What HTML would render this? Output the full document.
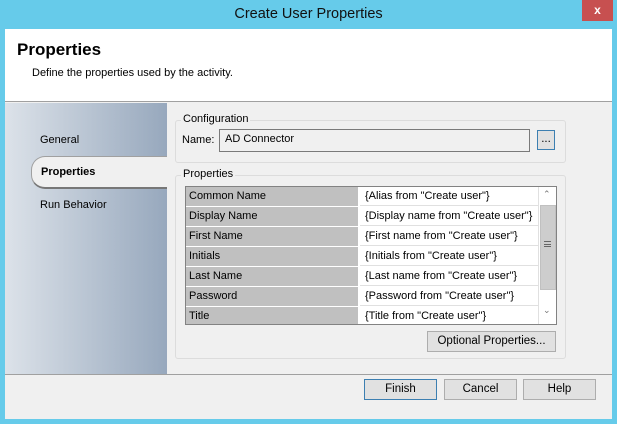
<!DOCTYPE html><html><head><style>
*{margin:0;padding:0;box-sizing:border-box}
body{width:617px;height:424px;background:#66cbea;font-family:"Liberation Sans",sans-serif;font-size:11px;color:#000;position:relative;overflow:hidden}
.a{position:absolute}
.btn{position:absolute;background:#e1e1e1;border:1px solid #adadad;text-align:center;line-height:18px;font-size:11.5px}
.row{position:absolute;left:0;width:352px;height:20px}
.row .k{position:absolute;left:0;width:172px;height:19px;background:#c0c0c0;padding-left:3px;line-height:19px}
.row .v{position:absolute;left:174px;width:178px;height:19px;background:#fff;padding-left:5px;line-height:19px;border-bottom:1px solid #e0e0e0}
</style></head><body>
<div class="a" style="left:0;top:6px;width:617px;text-align:center;font-size:14.5px;color:#111">Create User Properties</div>
<div class="a" style="left:582px;top:0;width:31px;height:21px;background:#c75050;color:#fff;text-align:center;font-weight:bold;font-size:12px;line-height:20px">x</div>
<div class="a" style="left:5px;top:29px;width:607px;height:390px;background:#f0f0f0"></div>
<div class="a" style="left:5px;top:29px;width:607px;height:73px;background:#fff;border-bottom:1px solid #a0a0a0"></div>
<div class="a" style="left:17px;top:40px;font-size:17px;font-weight:bold">Properties</div>
<div class="a" style="left:32px;top:67px;font-size:11px">Define the properties used by the activity.</div>
<div class="a" style="left:5px;top:103px;width:162px;height:271px;background:linear-gradient(90deg,#dce2e9,#97a8bd)"></div>
<div class="a" style="left:40px;top:134px">General</div>
<div class="a" style="left:31px;top:156px;width:136px;height:33px;background:#f0f0f0;border:1px solid #a0a0a0;border-right:none;border-bottom:2px solid #777;border-radius:14px 0 0 14px"></div>
<div class="a" style="left:41px;top:166px;font-weight:bold">Properties</div>
<div class="a" style="left:40px;top:199px">Run Behavior</div>
<div class="a" style="left:175px;top:120px;width:391px;height:43px;border:1px solid #dcdcdc;border-radius:3px"></div>
<div class="a" style="left:181px;top:113px;background:#f0f0f0;padding:0 2px">Configuration</div>
<div class="a" style="left:182px;top:134px">Name:</div>
<div class="a" style="left:219px;top:129px;width:311px;height:23px;border:1px solid #7a7a7a;background:#f0f0f0;padding:3px 5px">AD Connector</div>
<div class="btn" style="left:537px;top:130px;width:18px;height:20px;border-color:#3c7fb1;line-height:16px">...</div>
<div class="a" style="left:175px;top:175px;width:391px;height:184px;border:1px solid #dcdcdc;border-radius:3px"></div>
<div class="a" style="left:181px;top:168px;background:#f0f0f0;padding:0 2px">Properties</div>
<div class="a" style="left:185px;top:186px;width:372px;height:139px;border:1px solid #828282;background:#fff;overflow:hidden">
<div class="row" style="top:0"><div class="k">Common Name</div><div class="v">{Alias from "Create user"}</div></div>
<div class="row" style="top:20px"><div class="k">Display Name</div><div class="v">{Display name from "Create user"}</div></div>
<div class="row" style="top:40px"><div class="k">First Name</div><div class="v">{First name from "Create user"}</div></div>
<div class="row" style="top:60px"><div class="k">Initials</div><div class="v">{Initials from "Create user"}</div></div>
<div class="row" style="top:80px"><div class="k">Last Name</div><div class="v">{Last name from "Create user"}</div></div>
<div class="row" style="top:100px"><div class="k">Password</div><div class="v">{Password from "Create user"}</div></div>
<div class="row" style="top:120px"><div class="k">Title</div><div class="v">{Title from "Create user"}</div></div>
<div class="a" style="left:352px;top:0;width:18px;height:137px;background:#fff;border-left:1px solid #e0e0e0">
<div class="a" style="left:4px;top:2px;color:#777;font-size:9px">&#8963;</div>
<div class="a" style="left:1px;top:18px;width:16px;height:85px;background:#cdcdcd;border:1px solid #c0c0c0"></div>
<div class="a" style="left:5px;top:54px;width:7px;height:6px;border-top:1px solid #666;border-bottom:1px solid #666"><div style="margin-top:2px;border-top:1px solid #666"></div></div>
<div class="a" style="left:4px;top:118px;color:#777;font-size:9px">&#8964;</div>
</div></div>
<div class="btn" style="left:427px;top:331px;width:129px;height:21px">Optional Properties...</div>
<div class="a" style="left:5px;top:374px;width:607px;height:1px;background:#a0a0a0"></div>
<div class="btn" style="left:364px;top:379px;width:73px;height:21px;border-color:#3c7fb1">Finish</div>
<div class="btn" style="left:444px;top:379px;width:73px;height:21px">Cancel</div>
<div class="btn" style="left:523px;top:379px;width:73px;height:21px">Help</div>
</body></html>
